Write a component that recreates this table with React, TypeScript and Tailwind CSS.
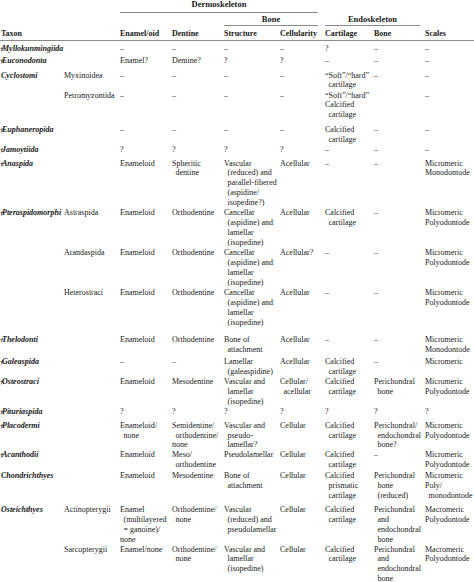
import React from "react";

const COLS =
  "grid grid-cols-[64px_56px_52px_52px_56px_45px_49px_51px_49px]";

type Cell = (string | string[])[];
type Row = {
  taxon?: string;
  dagger?: boolean;
  sub?: string;
  cells: Cell[];
  pt: string;
};

const D = "–";

const rows: Row[] = [
  { taxon: "Myllokunmingiida", dagger: true, pt: "pt-[2.3px]", cells: [[D], [D], [D], [D], ["?"], [D], [D]] },
  { taxon: "Euconodonta", dagger: true, pt: "pt-[1.2px]", cells: [["Enamel?"], ["Dentine?"], ["?"], ["?"], [D], [D], [D]] },
  { taxon: "Cyclostomi", sub: "Myxinoidea", pt: "pt-[4.2px]", cells: [[D], [D], [D], [D], [["“Soft”/“hard”", "cartilage"]], [D], [D]] },
  { sub: "Petromyzontida", pt: "pt-[0.4px]", cells: [[D], [D], [D], [D], ["“Soft”/“hard”", ["Calcified", "cartilage"]], [], [D]] },
  { taxon: "Euphaneropida", dagger: true, pt: "pt-[5.1px]", cells: [[D], [D], [D], [D], [["Calcified", "cartilage"]], [D], [D]] },
  { taxon: "Jamoytiida", dagger: true, pt: "pt-0", cells: [["?"], ["?"], ["?"], ["?"], [D], [D], [D]] },
  {
    taxon: "Anaspida", dagger: true, pt: "pt-[3.1px]",
    cells: [["Enameloid"], [["Spheritic", "dentine"]], [["Vascular", "(reduced) and", "parallel-fibered", "(aspidine/", "isopedine?)"]], ["Acellular"], [D], [D], ["Micromeric", "Monodontode"]],
  },
  {
    taxon: "Pteraspidomorphi", dagger: true, sub: "Astraspida", pt: "pt-[1px]",
    cells: [["Enameloid"], ["Orthodentine"], [["Cancellar", "(aspidine) and", "lamellar", "(isopedine)"]], ["Acellular"], [["Calcified", "cartilage"]], [D], ["Micromeric", "Polyodontode"]],
  },
  {
    sub: "Arandaspida", pt: "pt-[0.8px]",
    cells: [["Enameloid"], ["Orthodentine"], [["Cancellar", "(aspidine) and", "lamellar", "(isopedine)"]], ["Acellular?"], [D], [D], ["Micromeric", "Polyodontode"]],
  },
  {
    sub: "Heterostraci", pt: "pt-[0.8px]",
    cells: [["Enameloid"], ["Orthodentine"], [["Cancellar", "(aspidine) and", "lamellar", "(isopedine)"]], ["Acellular"], [D], [D], ["Micromeric", "Polyodontode"]],
  },
  {
    taxon: "Thelodonti", dagger: true, pt: "pt-[7.8px]",
    cells: [["Enameloid"], ["Orthodentine"], [["Bone of", "attachment"]], ["Acellular"], [D], [D], ["Micromeric", "Monodontode"]],
  },
  {
    taxon: "Galeaspida", dagger: true, pt: "pt-[1.9px]",
    cells: [[D], [D], [["Lamellar", "(galeaspidine)"]], ["Acellular"], [["Calcified", "cartilage"]], [D], ["Micromeric"]],
  },
  {
    taxon: "Osteostraci", dagger: true, pt: "pt-[0.9px]",
    cells: [["Enameloid"], ["Mesodentine"], [["Vascular and", "lamellar", "(isopedine)"]], [["Cellular/", "acellular"]], [["Calcified", "cartilage"]], [["Perichondral", "bone"]], ["Micromeric", "Polyodontode"]],
  },
  { taxon: "Pituriaspida", dagger: true, pt: "pt-[0.1px]", cells: [["?"], ["?"], ["?"], ["?"], ["?"], ["?"], ["?"]] },
  {
    taxon: "Placodermi", dagger: true, pt: "pt-[3.2px]",
    cells: [[["Enameloid/", "none"]], [["Semidentine/", "orthodentine/"], "none"], [["Vascular and", "pseudo-", "lamellar?"]], ["Cellular"], [["Calcified", "cartilage"]], [["Perichondral/", "endochondral", "bone?"]], ["Micromeric", "Polyodontode"]],
  },
  {
    taxon: "Acanthodii", dagger: true, pt: "pt-[0.1px]",
    cells: [["Enameloid"], [["Meso/", "orthodentine"]], ["Pseudolamellar"], ["Cellular"], [["Calcified", "cartilage"]], [D], ["Micromeric", "Polyodontode"]],
  },
  {
    taxon: "Chondrichthyes", pt: "pt-[1.4px]",
    cells: [["Enameloid"], ["Mesodentine"], [["Bone of", "attachment"]], ["Cellular"], [["Calcified", "prismatic", "cartilage"]], [["Perichondral", "bone", "(reduced)"]], ["Micromeric", ["Poly/", "monodontode"]]],
  },
  {
    taxon: "Osteichthyes", sub: "Actinopterygii", pt: "pt-[4.6px]",
    cells: [[["Enamel", "(multilayered", "= ganoine)/"], "none"], [["Orthodentine/", "none"]], [["Vascular", "(reduced) and", "pseudolamellar"]], ["Cellular"], [["Calcified", "cartilage"]], [["Perichondral", "and", "endochondral", "bone"]], ["Macromeric", "Polyodontode"]],
  },
  {
    sub: "Sarcopterygii", pt: "pt-0",
    cells: [["Enamel/none"], [["Orthodentine/", "none"]], [["Vascular and", "lamellar", "(isopedine)"]], ["Cellular"], [["Calcified", "cartilage"]], [["Perichondral", "and", "endochondral", "bone"]], ["Macromeric", "Polyodontode"]],
  },
];

function CellView({ cell }: { cell: Cell }) {
  return (
    <div>
      {cell.map((item, i) => {
        const lines = Array.isArray(item) ? item : [item];
        return lines.map((l, j) => (
          <div key={`${i}-${j}`} className={j > 0 ? "pl-[3.5px] whitespace-nowrap" : "whitespace-nowrap"}>
            {l}
          </div>
        ));
      })}
    </div>
  );
}

export default function App() {
  return (
    <div
      className="w-[474px] h-[582px] overflow-hidden bg-white text-[#202020] text-[8px] leading-[9.8px]"
      style={{ fontFamily: '"Liberation Serif", "Times New Roman", serif' }}
    >
      {/* Group header */}
      <div className={COLS}>
        <div className="col-start-3 col-span-4 mr-[7px] border-b-[1.5px] border-[#8c8c8c] text-center font-bold text-[8.5px] leading-[9px] pb-[2.5px]">
          Dermoskeleton
        </div>
      </div>
      <div className={`${COLS} mt-[2.5px]`}>
        <div className="col-start-5 col-span-2 mr-[7px] border-b-[1.5px] border-[#8c8c8c] text-center font-bold text-[8.5px] leading-[9px] pb-[0.8px]">
          Bone
        </div>
        <div className="col-start-7 col-span-2 mr-[5px] border-b-[1.5px] border-[#8c8c8c] text-center font-bold text-[8.5px] leading-[9px] pb-[0.8px]">
          Endoskeleton
        </div>
      </div>
      <div className={`${COLS} pt-[3.7px] pb-[1.8px] border-b-[1.5px] border-[#8c8c8c] font-bold leading-[9px]`}>
        <div className="pl-[1px]">Taxon</div>
        <div></div>
        <div>Enamel/oid</div>
        <div>Dentine</div>
        <div>Structure</div>
        <div className="whitespace-nowrap">Cellularity</div>
        <div>Cartilage</div>
        <div>Bone</div>
        <div>Scales</div>
      </div>
      {rows.map((r, i) => (
        <div key={i} className={`${COLS} ${r.pt}`}>
          <div className="font-bold italic whitespace-nowrap">
            {r.taxon ? (
              r.dagger ? (
                <>
                  <span className="mr-[-1.5px] text-[7px]">†</span>
                  {r.taxon}
                </>
              ) : (
                <span className="pl-[1px]">{r.taxon}</span>
              )
            ) : null}
          </div>
          <div className="whitespace-nowrap">{r.sub ?? ""}</div>
          {r.cells.map((c, k) => (
            <CellView key={k} cell={c} />
          ))}
        </div>
      ))}
    </div>
  );
}
